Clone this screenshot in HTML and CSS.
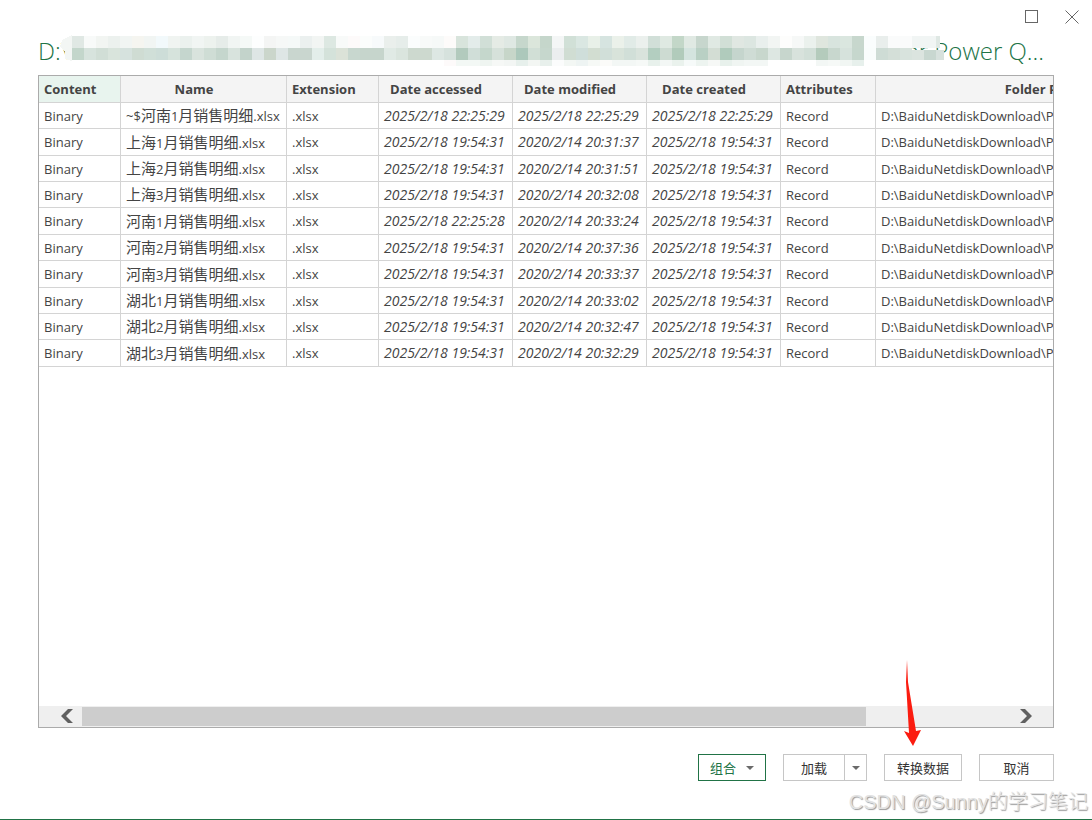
FILE: index.html
```html
<!DOCTYPE html>
<html lang="zh-CN">
<head>
    <meta charset="UTF-8">
    <meta name="viewport" content="width=device-width, initial-scale=1.0">
    <title>Power Query</title>
    <link rel="stylesheet" href="styles.css">
</head>
<body>
    <div class="window">

        <!-- Window controls -->
        <div class="window-controls">
            <button type="button" aria-label="Maximize">
                <svg width="14" height="14" viewBox="0 0 14 14"><rect x="0.5" y="0.5" width="12" height="12"/></svg>
            </button>
            <button type="button" aria-label="Close">
                <svg width="14" height="14" viewBox="0 0 14 14"><path d="M0.5 0.5L13.5 13.5M13.5 0.5L0.5 13.5"/></svg>
            </button>
        </div>

        <!-- Path of the source folder, the middle is masked -->
        <h1 class="title">
            <span>D:\</span>
            <span>for Power Q...</span>
            <svg id="mask" class="mask" width="886" height="32" viewBox="0 0 886 32" shape-rendering="crispEdges" aria-hidden="true"></svg>
        </h1>

        <!-- File preview -->
        <main class="preview">
            <div class="table-wrap">
                <table>
                    <colgroup>
                        <col class="col-content">
                        <col class="col-name">
                        <col class="col-ext">
                        <col class="col-date">
                        <col class="col-date">
                        <col class="col-date">
                        <col class="col-attr">
                        <col class="col-folder">
                    </colgroup>
                    <thead>
                        <tr>
                            <th class="left selected">Content</th>
                            <th>Name</th>
                            <th class="left">Extension</th>
                            <th>Date accessed</th>
                            <th>Date modified</th>
                            <th>Date created</th>
                            <th class="left">Attributes</th>
                            <th>Folder Path</th>
                        </tr>
                    </thead>
                    <tbody>
                        <tr><td>Binary</td><td>~$<span class="han">河南</span>1<span class="han">月销售明细</span>.xlsx</td><td>.xlsx</td><td class="date">2025/2/18 22:25:29</td><td class="date">2025/2/18 22:25:29</td><td class="date">2025/2/18 22:25:29</td><td>Record</td><td>D:\BaiduNetdiskDownload\Power Query\</td></tr>
                        <tr><td>Binary</td><td><span class="han">上海</span>1<span class="han">月销售明细</span>.xlsx</td><td>.xlsx</td><td class="date">2025/2/18 19:54:31</td><td class="date">2020/2/14 20:31:37</td><td class="date">2025/2/18 19:54:31</td><td>Record</td><td>D:\BaiduNetdiskDownload\Power Query\</td></tr>
                        <tr><td>Binary</td><td><span class="han">上海</span>2<span class="han">月销售明细</span>.xlsx</td><td>.xlsx</td><td class="date">2025/2/18 19:54:31</td><td class="date">2020/2/14 20:31:51</td><td class="date">2025/2/18 19:54:31</td><td>Record</td><td>D:\BaiduNetdiskDownload\Power Query\</td></tr>
                        <tr><td>Binary</td><td><span class="han">上海</span>3<span class="han">月销售明细</span>.xlsx</td><td>.xlsx</td><td class="date">2025/2/18 19:54:31</td><td class="date">2020/2/14 20:32:08</td><td class="date">2025/2/18 19:54:31</td><td>Record</td><td>D:\BaiduNetdiskDownload\Power Query\</td></tr>
                        <tr><td>Binary</td><td><span class="han">河南</span>1<span class="han">月销售明细</span>.xlsx</td><td>.xlsx</td><td class="date">2025/2/18 22:25:28</td><td class="date">2020/2/14 20:33:24</td><td class="date">2025/2/18 19:54:31</td><td>Record</td><td>D:\BaiduNetdiskDownload\Power Query\</td></tr>
                        <tr><td>Binary</td><td><span class="han">河南</span>2<span class="han">月销售明细</span>.xlsx</td><td>.xlsx</td><td class="date">2025/2/18 19:54:31</td><td class="date">2020/2/14 20:37:36</td><td class="date">2025/2/18 19:54:31</td><td>Record</td><td>D:\BaiduNetdiskDownload\Power Query\</td></tr>
                        <tr><td>Binary</td><td><span class="han">河南</span>3<span class="han">月销售明细</span>.xlsx</td><td>.xlsx</td><td class="date">2025/2/18 19:54:31</td><td class="date">2020/2/14 20:33:37</td><td class="date">2025/2/18 19:54:31</td><td>Record</td><td>D:\BaiduNetdiskDownload\Power Query\</td></tr>
                        <tr><td>Binary</td><td><span class="han">湖北</span>1<span class="han">月销售明细</span>.xlsx</td><td>.xlsx</td><td class="date">2025/2/18 19:54:31</td><td class="date">2020/2/14 20:33:02</td><td class="date">2025/2/18 19:54:31</td><td>Record</td><td>D:\BaiduNetdiskDownload\Power Query\</td></tr>
                        <tr><td>Binary</td><td><span class="han">湖北</span>2<span class="han">月销售明细</span>.xlsx</td><td>.xlsx</td><td class="date">2025/2/18 19:54:31</td><td class="date">2020/2/14 20:32:47</td><td class="date">2025/2/18 19:54:31</td><td>Record</td><td>D:\BaiduNetdiskDownload\Power Query\</td></tr>
                        <tr><td>Binary</td><td><span class="han">湖北</span>3<span class="han">月销售明细</span>.xlsx</td><td>.xlsx</td><td class="date">2025/2/18 19:54:31</td><td class="date">2020/2/14 20:32:29</td><td class="date">2025/2/18 19:54:31</td><td>Record</td><td>D:\BaiduNetdiskDownload\Power Query\</td></tr>
                    </tbody>
                </table>
            </div>

            <div class="scrollbar">
                <button type="button" class="scroll-left" aria-label="Scroll left">
                    <svg width="12" height="14" viewBox="0 0 12 14"><path d="M7 0H12L5 7L12 14H7L0 7Z"/></svg>
                </button>
                <div class="track"><div class="thumb"></div></div>
                <button type="button" class="scroll-right" aria-label="Scroll right">
                    <svg width="12" height="14" viewBox="0 0 12 14"><path d="M5 0H0L7 7L0 14H5L12 7Z"/></svg>
                </button>
            </div>
        </main>

        <!-- Actions -->
        <footer class="actions">
            <button type="button" class="btn primary">组合 <span class="caret"></span></button>
            <div class="split">
                <button type="button" class="btn">加载</button>
                <button type="button" class="btn more" aria-label="加载选项"><span class="caret"></span></button>
            </div>
            <div class="pointed">
                <button type="button" class="btn">转换数据</button>
                <svg class="arrow" width="20" height="88" viewBox="0 0 20 88" aria-hidden="true">
                    <path d="M5 2L6 24L14 73L19 72L11 88L2 73L7 75L4 24Z"/>
                </svg>
            </div>
            <button type="button" class="btn cancel">取消</button>
        </footer>

        <div class="watermark">CSDN @Sunny的学习笔记</div>
    </div>

    <script src="mask.js"></script>
</body>
</html>
```
FILE: styles.css
```css
* {
    box-sizing: border-box;
}

body {
    margin: 0;
    background: #fff;
    color: #444;
    font-family: "Open Sans", "Noto Sans CJK SC", sans-serif;
    font-size: 13px;
}

button {
    font-family: inherit;
    font-size: inherit;
    padding: 0;
    border: none;
    background: none;
    color: inherit;
}

svg {
    display: block;
}

.window {
    position: relative;
    display: flex;
    flex-direction: column;
    min-height: 100vh;
    padding: 0 38px 38px;
    border-bottom: 1px solid #217346;
}

/* Window controls */
.window-controls {
    display: flex;
    justify-content: flex-end;
    gap: 26px;
    height: 32px;
    padding-top: 1px;
    margin-right: -25px;
}

.window-controls svg {
    fill: none;
    stroke: #666;
}

/* Title */
.title {
    position: relative;
    display: flex;
    justify-content: space-between;
    height: 43px;
    margin: 0;
    padding-right: 10px;
    color: #217346;
    font-size: 24px;
    font-weight: 300;
    line-height: 38px;
    white-space: nowrap;
}

.mask {
    position: absolute;
    left: 22px;
    top: 3px;
}

/* Preview */
.preview {
    flex: 1;
    display: flex;
    flex-direction: column;
    border: 1px solid #ababab;
}

.table-wrap {
    flex: 1;
    overflow: hidden;
}

table {
    width: 1189px;
    table-layout: fixed;
    border-collapse: separate;
    border-spacing: 0;
}

.col-content { width: 82px; }
.col-name { width: 166px; }
.col-ext { width: 92px; }
.col-date { width: 134px; }
.col-attr { width: 95px; }
.col-folder { width: 352px; }

th,
td {
    height: 26px;
    padding: 0 5px;
    border-right: 1px solid #d4d4d4;
    border-bottom: 1px solid #d4d4d4;
    line-height: 20px;
    text-align: left;
    white-space: nowrap;
}

th {
    height: 27px;
    padding-right: 24px;
    background: #f4f4f4;
    text-align: center;
}

th.left {
    padding-right: 5px;
    text-align: left;
}

th.selected {
    background: #e8f4ee;
}

tbody tr:nth-child(5n) td,
tbody tr:nth-child(5n + 2) td {
    height: 27px;
}

td.date {
    font-size: 14px;
    font-style: italic;
}

.han {
    font-family: "Noto Sans CJK SC", sans-serif;
    font-size: 15px;
}

/* Scrollbar */
.scrollbar {
    display: flex;
    height: 21px;
    background: #efefef;
}

.scrollbar button {
    display: flex;
    align-items: center;
    justify-content: center;
    width: 43px;
    padding-bottom: 2px;
}

.scrollbar path {
    fill: #606060;
}

.scrollbar .scroll-left {
    padding-left: 13px;
}

.scrollbar .scroll-right {
    padding-right: 11px;
}

.track {
    flex: 1;
    padding: 1px 0;
}

.thumb {
    width: 84.5%;
    height: 100%;
    background: #cdcdcd;
}

/* Actions */
.actions {
    display: flex;
    justify-content: flex-end;
    gap: 17px;
    margin-top: 26px;
}

.btn {
    height: 27px;
    border: 1px solid #c6c6c6;
    background: #fff;
    color: #333;
}

.primary {
    display: flex;
    align-items: center;
    justify-content: center;
    gap: 10px;
    width: 68px;
    border-color: #217346;
    color: #217346;
}

.caret {
    display: block;
    border: 4px solid transparent;
    border-top-color: #6a6a6a;
    border-bottom: none;
}

.split {
    display: flex;
}

.split .btn {
    width: 61px;
    border-right: none;
}

.split .more {
    display: flex;
    align-items: center;
    justify-content: center;
    width: 23px;
    border-right: 1px solid #c6c6c6;
}

.pointed {
    position: relative;
}

.pointed .btn {
    width: 78px;
}

.arrow {
    position: absolute;
    left: 18px;
    top: -96px;
    fill: #fb1c10;
}

.cancel {
    width: 75px;
}

.watermark {
    position: absolute;
    right: 4px;
    bottom: 2px;
    color: #e2e2e2;
    font-family: "Liberation Sans", "Noto Sans CJK SC", sans-serif;
    font-size: 20px;
    font-weight: 300;
    line-height: 30px;
    text-shadow: 1px 1px 1px #999;
}
```
FILE: mask.js
```js
// Mosaic over the folder path: 12px cells, two full rows and a faint one below
const top_row = "e0e8e4 f8faf9 f2f5f2 ecf1ee f1f5f3 f5f5f0 f1f5f3 f2f9fb f0f4f1 ebf1ee f1f5f3 edf2ee e6ece9 f1f5f3 f5f9f7 fdfefe f4f5f4 f6f8f7 f5f9f8 ebf0ef f2f5f3 dde8e2 f8faf9 fdfafa fbfdfc f7fafb eaefec e6edea fbfdfd f8faf9 f6f9f8 fdfbfa d8e4dc e3ecea d1dfd7 e5ebe5 dfe8e3 c6d7cc dbe6db c5d6cb f4f6f6 d1e0d7 dae7e2 e8f0e8 d6e4e0 ebf1ea e1ebe7 ebf0ed d1dfd8 dfe9e2 c3d7c8 e0e9e3 c7d6cd e0e9e3 d1dfd6 e0e7e2 dce6e1 e9efed f2f5f3 fdfdfc f6f8f7 ebf1ed dfe6de d8e4de dae6df c7d7cd fafdfd e9eeec fafbfb fafbfb f1f5f4 f1f5f4 dfe8e4".split(" ");
const mid_row = "c3d6cb d7e3dd d1ded6 d9e4dc d6e2de cfdcd3 d0dfd8 cdddd8 d6e3dc c5d6ce d9e3dd cfddd5 c5d6cd d8e3dd c3d3cb dee6e5 cbd6cb dee6e5 c9d6cf c9d6cf e3eeea d4e2da dbe2d8 c8d7cf c6d5cc c6d5cc e0eae5 dae5de cdd9cf cdd9cf dde7e3 d6e2dd b2cabd d0ded8 c5d7cc d6e1da c7d6c9 acc8bb d1dfd6 c6d7cd ebeeef d0ddd3 cfdeda d2ddd1 d1dfd9 d8e3da d1dfd8 d9e3dc b3cec0 cddbd2 b1cbbb d4e4df b9d0c4 d3ddd4 b0cbbc c5d5cd cfdcd5 c8d7cd dde7e2 c7d6cd d8e2dc d2dfd8 b4cbbc c8d7ce d6e2dc c6d7cd f9fdfc cedcd5 d4dfd8 d8e3dd dbe4df c8d7d0 d7e1dd".split(" ");
const low_row = { 31: "fdfafa", 32: "f3f8f5", 33: "f3f8f5", 34: "eff5f1", 35: "f6f8f6", 36: "f3f6f4", 37: "e7f0ec", 38: "f3f6f3", 39: "e8f0ec", 40: "fbfcfc", 41: "f3f7f4", 42: "eef4f3", 43: "f6f9f6", 44: "fbfbf9", 45: "f3f7f5", 46: "f3f7f5", 47: "f6f9f7", 48: "e8f1ec", 49: "f3f7f5", 50: "eaf2ed", 51: "f6faf9", 52: "edf4f0", 53: "f6f8f6", 54: "e8f1ec", 55: "f0f5f2", 56: "f3f7f5", 57: "f3f7f5", 62: "f3f7f5", 63: "f6f9f7", 64: "f1f6f3", 65: "e7f0ec" };

const mask = document.getElementById("mask");

function shape(points, color) {
    const el = document.createElementNS("http://www.w3.org/2000/svg", "polygon");
    el.setAttribute("points", points);
    el.setAttribute("fill", color);
    mask.appendChild(el);
}

function cell(x, y, w, h, color) {
    shape(`${x},${y} ${x + w},${y} ${x + w},${y + h} ${x},${y + h}`, "#" + color);
}

// rounded start of the brush stroke
shape("12,0 12,26 5,24 5,17 0,12 2,5", "#f3f6f4");

top_row.forEach((color, i) => {
    const last = i === top_row.length - 1;
    cell(12 + i * 12, 1, last ? 4 : 12, 12, color);
});

mid_row.forEach((color, i) => {
    const last = i === mid_row.length - 1;
    const y = i > 69 ? 15 : 13;
    cell(12 + i * 12, y, last ? 8 : 12, 25 - y, color);
});

Object.entries(low_row).forEach(([i, color]) => {
    cell(12 + i * 12, 25, 12, 6, color);
});
```
